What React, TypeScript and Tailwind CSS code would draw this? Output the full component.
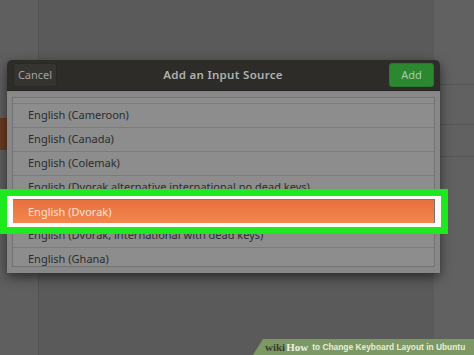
import React from "react";

const rows = [
  "English (Cameroon)",
  "English (Canada)",
  "English (Colemak)",
  "English (Dvorak alternative international no dead keys)",
  "English (Dvorak)",
  "English (Dvorak, international with dead keys)",
  "English (Ghana)",
];

export default function App() {
  return (
    <div
      className="relative w-[474px] h-[355px] overflow-hidden bg-[#5a5a5a] flex"
      style={{ fontFamily: '"Noto Sans", "Open Sans", sans-serif' }}
    >
      {/* background left column */}
      <div className="w-[39px] shrink-0 h-full bg-[#5f5f5f] border-r border-[#525252] flex flex-col">
        <div className="h-[118px]" />
        <div className="h-[32px] w-[12px] bg-[#6a3a22]" />
      </div>

      <div className="flex-1 relative">
        <div className="absolute right-0 top-0 w-[40px] h-full bg-[#616161] flex flex-col">
          <div className="h-[85px] border-b border-[#555]" />
          <div className="h-[40px] border-b border-[#555]" />
          <div className="h-[32px] border-b border-[#555]" />
        </div>
      </div>

      {/* dialog */}
      <div className="absolute left-[7px] top-[60px] w-[433px] rounded-t-[5px] shadow-[0_4px_12px_rgba(0,0,0,0.55)]">
        <div className="h-[31px] rounded-t-[5px] bg-[#2e2c29] border-b border-[#222] flex items-center justify-between px-[6px]">
          <div className="h-[24px] w-[44px] rounded-[3px] bg-[#363430] border border-[#2a2825] flex items-center justify-center text-[11px] text-[#a3a3a3]">
            Cancel
          </div>
          <div className="text-[11.5px] font-semibold tracking-[0.3px] text-[#b0b0b0]">
            Add an Input Source
          </div>
          <div className="h-[24px] w-[45px] rounded-[3px] bg-[#2c8731] border border-[#277a2b] flex items-center justify-center text-[11px] text-[#a9cca8]">
            Add
          </div>
        </div>
        <div className="bg-[#888888] px-[5px] pt-[6px] pb-[6px]">
          <div className="h-[170px] border border-[#727272] bg-[#8d8d8d] overflow-hidden">
            <div className="h-[24px] -mt-[18px] border-b border-[#7b7b7b] flex items-center pl-[15px] text-[11px] text-[#2c2c2c]">
              English (Australian)
            </div>
            {rows.map((r) => {
              const sel = r === "English (Dvorak)";
              return (
                <div
                  key={r}
                  className={
                    sel
                      ? "h-[24px] bg-gradient-to-b from-[#e8703e] to-[#f2884f] flex items-center pl-[15px] text-[11px] text-[#f6e2d2] whitespace-nowrap"
                      : "h-[24px] border-b border-[#7b7b7b] flex items-center pl-[15px] text-[11px] text-[#2c2c2c] whitespace-nowrap"
                  }
                >
                  {r}
                </div>
              );
            })}
          </div>
        </div>
      </div>

      {/* green highlight annotation */}
      <div className="absolute left-0 top-[189px] w-[448px] h-[45px] border-[7px] border-[#1ee81e]">
        <div className="w-full h-full border-[#fafaf6] border-l-[6px] border-r-[6px] border-t-[3px] border-b-[4px]" />
      </div>

      {/* watermark */}
      <div className="absolute right-0 bottom-0 w-[221px] h-[16px] bg-[#7c9965] [clip-path:polygon(10px_0,100%_0,100%_100%,0_100%)] flex items-center pl-[12px] whitespace-nowrap">
        <span
          className="text-[11px] font-bold text-[#3b3d2c]"
          style={{ fontFamily: '"Liberation Serif", serif' }}
        >
          wiki
        </span>
        <span
          className="text-[11px] font-bold text-[#eef0e2] ml-[1px]"
          style={{ fontFamily: '"Liberation Serif", serif' }}
        >
          How
        </span>
        <span
          className="text-[8.4px] font-bold text-[#e9ecdd] ml-[4px]"
          style={{ fontFamily: '"Liberation Sans", sans-serif' }}
        >
          to Change Keyboard Layout in Ubuntu
        </span>
      </div>
    </div>
  );
}
